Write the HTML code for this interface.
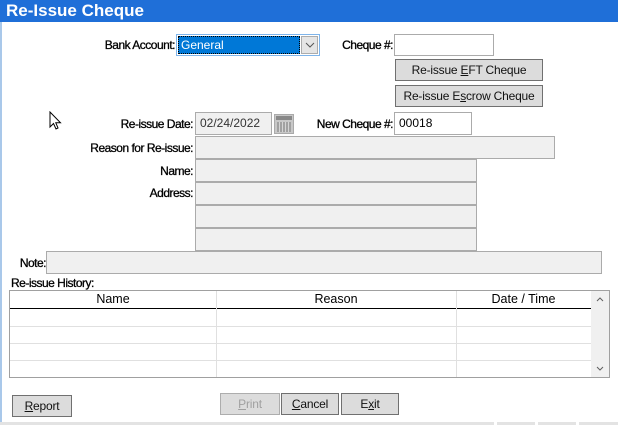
<!DOCTYPE html>
<html><head><meta charset="utf-8"><style>
*{box-sizing:border-box;margin:0;padding:0}
body{width:618px;height:425px;background:#fff;position:relative;overflow:hidden;font-family:"Liberation Sans",sans-serif;font-size:12px;color:#000}
.a{position:absolute}
.t{position:absolute;top:0;left:0;width:618px;height:22px;background:#1f6fd8;color:#fff;font-weight:bold;font-size:17px;line-height:22px;padding-left:6px}
.lb{position:absolute;text-align:right;font-size:12px;line-height:14px;letter-spacing:-0.5px;-webkit-text-stroke:0.3px #000;white-space:nowrap}
.in{position:absolute;border:1px solid #ababab;background:#f0f0f0}
.w{background:#fff}
.btn{position:absolute;background:#dcdcdc;border:1px solid #707070;text-align:center;font-size:12px;color:#111;letter-spacing:-0.2px}
.g{position:absolute;background:#e3e3e3}
</style></head><body>
<div class="t">Re-Issue Cheque</div>
<div class="a" style="left:0;top:22px;width:2px;height:400px;background:#a9c8ea"></div>

<div class="lb" style="right:443px;top:38px">Bank Account:</div>
<div class="a" style="left:176px;top:34px;width:144px;height:22px;border:1px solid #7eb4ea;background:#fff"></div>
<div class="a" style="left:178px;top:36px;width:122px;height:18px;background:#0078d7;border:1px dotted #000;color:#fff;line-height:16px;padding-left:2px">General</div>
<div class="a" style="left:301px;top:36px;width:17px;height:18px;background:#e5e5e5;border:1px solid #acacac"><svg class="a" style="left:3px;top:5px" width="10" height="6" viewBox="0 0 10 6"><path d="M1 1 L5 5 L9 1" fill="none" stroke="#555" stroke-width="1"/></svg></div>

<div class="lb" style="right:225px;top:38px">Cheque #:</div>
<div class="in w" style="left:394px;top:34px;width:100px;height:22px"></div>
<div class="btn" style="left:395px;top:59px;width:148px;height:22px;line-height:20px">Re-issue <u>E</u>FT Cheque</div>
<div class="btn" style="left:395px;top:85px;width:148px;height:22px;line-height:20px">Re-issue E<u>s</u>crow Cheque</div>

<svg class="a" style="left:49px;top:111px" width="14" height="20" viewBox="0 0 14 20"><path d="M1 1 L1 16 L4.5 12.5 L7 18 L9 17 L6.8 11.8 L11.5 11.8 Z" fill="#fff" stroke="#000" stroke-width="1"/></svg>

<div class="lb" style="right:425px;top:117px">Re-issue Date:</div>
<div class="in" style="left:195px;top:112px;width:77px;height:23px;line-height:21px;padding-left:4px;color:#333">02/24/2022</div>
<div class="a" style="left:274px;top:114px;width:20px;height:20px;background:#c8c8c8;border:1px solid #aaa">
<div class="a" style="left:1px;top:1px;width:16px;height:4px;background:#888"></div>
<div class="a" style="left:2px;top:7px;width:14px;height:10px;background:repeating-linear-gradient(90deg,#888 0 2px,#ddd 2px 3px),#ddd;opacity:.6"></div></div>
<div class="lb" style="right:225px;top:117px">New Cheque #:</div>
<div class="in w" style="left:394px;top:112px;width:78px;height:23px;line-height:21px;padding-left:4px">00018</div>

<div class="lb" style="right:425px;top:141px">Reason for Re-issue:</div>
<div class="in" style="left:195px;top:136px;width:360px;height:23px"></div>
<div class="lb" style="right:425px;top:164px">Name:</div>
<div class="in" style="left:195px;top:159px;width:282px;height:23px"></div>
<div class="lb" style="right:425px;top:186px">Address:</div>
<div class="in" style="left:195px;top:182px;width:282px;height:23px"></div>
<div class="in" style="left:195px;top:205px;width:282px;height:23px"></div>
<div class="in" style="left:195px;top:228px;width:282px;height:23px"></div>

<div class="lb" style="right:572px;top:256px">Note:</div>
<div class="in" style="left:46px;top:251px;width:556px;height:23px"></div>
<div class="lb" style="left:11px;top:276px;text-align:left">Re-issue History:</div>

<div class="a" style="left:9px;top:290px;width:601px;height:88px;border:1px solid #a0a0a0;background:#fff">
<div class="a" style="left:0;top:0;width:581px;height:18px;border-bottom:1px solid #000"></div>
<div class="a" style="left:0;top:0;width:206px;height:18px;text-align:center;line-height:17px;font-size:12.5px">Name</div>
<div class="a" style="left:206px;top:0;width:240px;height:18px;text-align:center;line-height:17px;font-size:12.5px">Reason</div>
<div class="a" style="left:446px;top:0;width:135px;height:18px;text-align:center;line-height:17px;font-size:12.5px">Date / Time</div>
<div class="a" style="left:206px;top:0;width:1px;height:86px;background:#e0e0e0"></div>
<div class="a" style="left:446px;top:0;width:1px;height:86px;background:#e0e0e0"></div>
<div class="a" style="left:0;top:35px;width:581px;height:1px;background:#e0e0e0"></div>
<div class="a" style="left:0;top:52px;width:581px;height:1px;background:#e0e0e0"></div>
<div class="a" style="left:0;top:69px;width:581px;height:1px;background:#e0e0e0"></div>
<div class="a" style="left:581px;top:0;width:18px;height:86px;background:#f0f0f0">
<svg class="a" style="left:5px;top:6px" width="8" height="5" viewBox="0 0 8 5"><path d="M1 4 L4 1 L7 4" fill="none" stroke="#606060"/></svg>
<svg class="a" style="left:5px;top:75px" width="8" height="5" viewBox="0 0 8 5"><path d="M1 1 L4 4 L7 1" fill="none" stroke="#606060"/></svg>
</div>
</div>

<div class="btn" style="left:12px;top:395px;width:60px;height:22px;line-height:21px"><u>R</u>eport</div>
<div class="btn" style="left:220px;top:393px;width:60px;height:22px;line-height:21px;color:#a0a0a0;border-color:#adadad"><u>P</u>rint</div>
<div class="btn" style="left:281px;top:393px;width:58px;height:22px;line-height:21px"><u>C</u>ancel</div>
<div class="btn" style="left:341px;top:393px;width:58px;height:22px;line-height:21px">E<u>x</u>it</div>

<div class="g" style="left:0;top:422px;width:494px;height:3px"></div>
<div class="g" style="left:497px;top:422px;width:38px;height:3px"></div>
<div class="g" style="left:538px;top:422px;width:38px;height:3px"></div>
<div class="g" style="left:579px;top:422px;width:39px;height:3px"></div>
</body></html>
